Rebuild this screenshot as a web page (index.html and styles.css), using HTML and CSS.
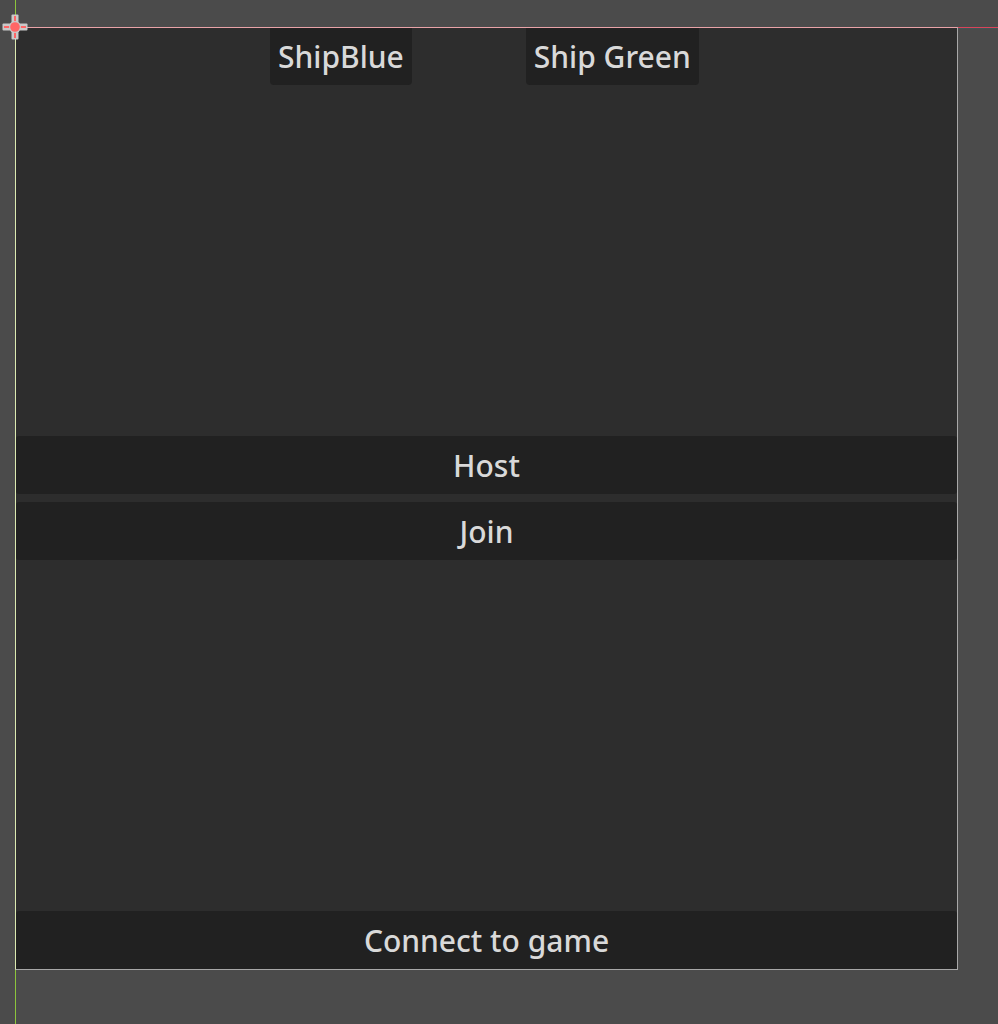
FILE: index.html
```html
<!DOCTYPE html>
<html>
<head>
<meta charset="utf-8">
<link rel="stylesheet" href="styles.css">
</head>
<body>
<div class="viewport">
  <div class="canvas">
    <div class="top-row">
      <div class="btn small">ShipBlue</div>
      <div class="btn small">Ship Green</div>
    </div>
    <div class="btn wide host">Host</div>
    <div class="btn wide join">Join</div>
    <div class="btn wide connect">Connect to game</div>
  </div>
  <div class="guide-v-top"></div>
  <div class="guide-v-bottom"></div>
  <div class="guide-h-right"></div>
  <div class="guide-h-right2"></div>
  <svg class="origin" width="28" height="28" viewBox="0 0 28 28">
    <rect x="1.5" y="10.5" width="25" height="7" rx="1" fill="#c9c9c9"/>
    <rect x="10.5" y="1.5" width="7" height="25" rx="1" fill="#c9c9c9"/>
    <rect x="3" y="13" width="22" height="2" fill="#ff6666"/>
    <rect x="13" y="3" width="2" height="22" fill="#ff6666"/>
    <circle cx="14" cy="14" r="6" fill="#c9c9c9"/>
    <circle cx="14" cy="14" r="4.8" fill="#ff6666"/>
  </svg>
</div>
</body>
</html>
```

FILE: styles.css
```css
html, body {
  margin: 0;
  padding: 0;
  background: #4b4b4b;
  width: 998px;
  height: 1024px;
  overflow: hidden;
}

.viewport {
  position: relative;
  width: 998px;
  height: 1024px;
  padding: 27px 0 0 15px;
  box-sizing: border-box;
  font-family: "Noto Sans", "Open Sans", sans-serif;
}

.canvas {
  width: 941px;
  height: 941px;
  background: #2d2d2d;
  border-left: 1px solid #dbe9b0;
  border-top: 1px solid #e9a3a8;
  border-right: 1px solid #a8a8a8;
  border-bottom: 1px solid #a8a8a8;
  display: flex;
  flex-direction: column;
}

.top-row {
  display: flex;
  gap: 114px;
  padding-left: 254px;
  height: 57px;
}

.btn {
  background: #212121;
  color: #d9d9d9;
  font-size: 30px;
  font-weight: 500;
  display: flex;
  align-items: center;
  justify-content: center;
  box-sizing: border-box;
}

.small {
  height: 57px;
  padding: 0 8px 0;
  border-radius: 0 0 4px 4px;
}

.wide {
  height: 58px;
  padding-top: 1px;
}

.host {
  margin-top: 351px;
  border-radius: 3px;
}

.join {
  margin-top: 8px;
  border-radius: 3px;
}

.connect {
  margin-top: auto;
  border-radius: 3px 3px 0 0;
}

.guide-v-top {
  position: absolute;
  left: 15px;
  top: 0;
  width: 1px;
  height: 27px;
  background: #8cc43c;
}

.guide-v-bottom {
  position: absolute;
  left: 15px;
  top: 970px;
  width: 1px;
  height: 54px;
  background: #8cc43c;
}

.guide-h-right {
  position: absolute;
  left: 958px;
  top: 27px;
  width: 40px;
  height: 1px;
  background: #d9445a;
}

.guide-h-right2 {
  position: absolute;
  left: 958px;
  top: 28px;
  width: 40px;
  height: 1px;
  background: #3f5656;
}

.origin {
  position: absolute;
  left: 1px;
  top: 13px;
}
```
